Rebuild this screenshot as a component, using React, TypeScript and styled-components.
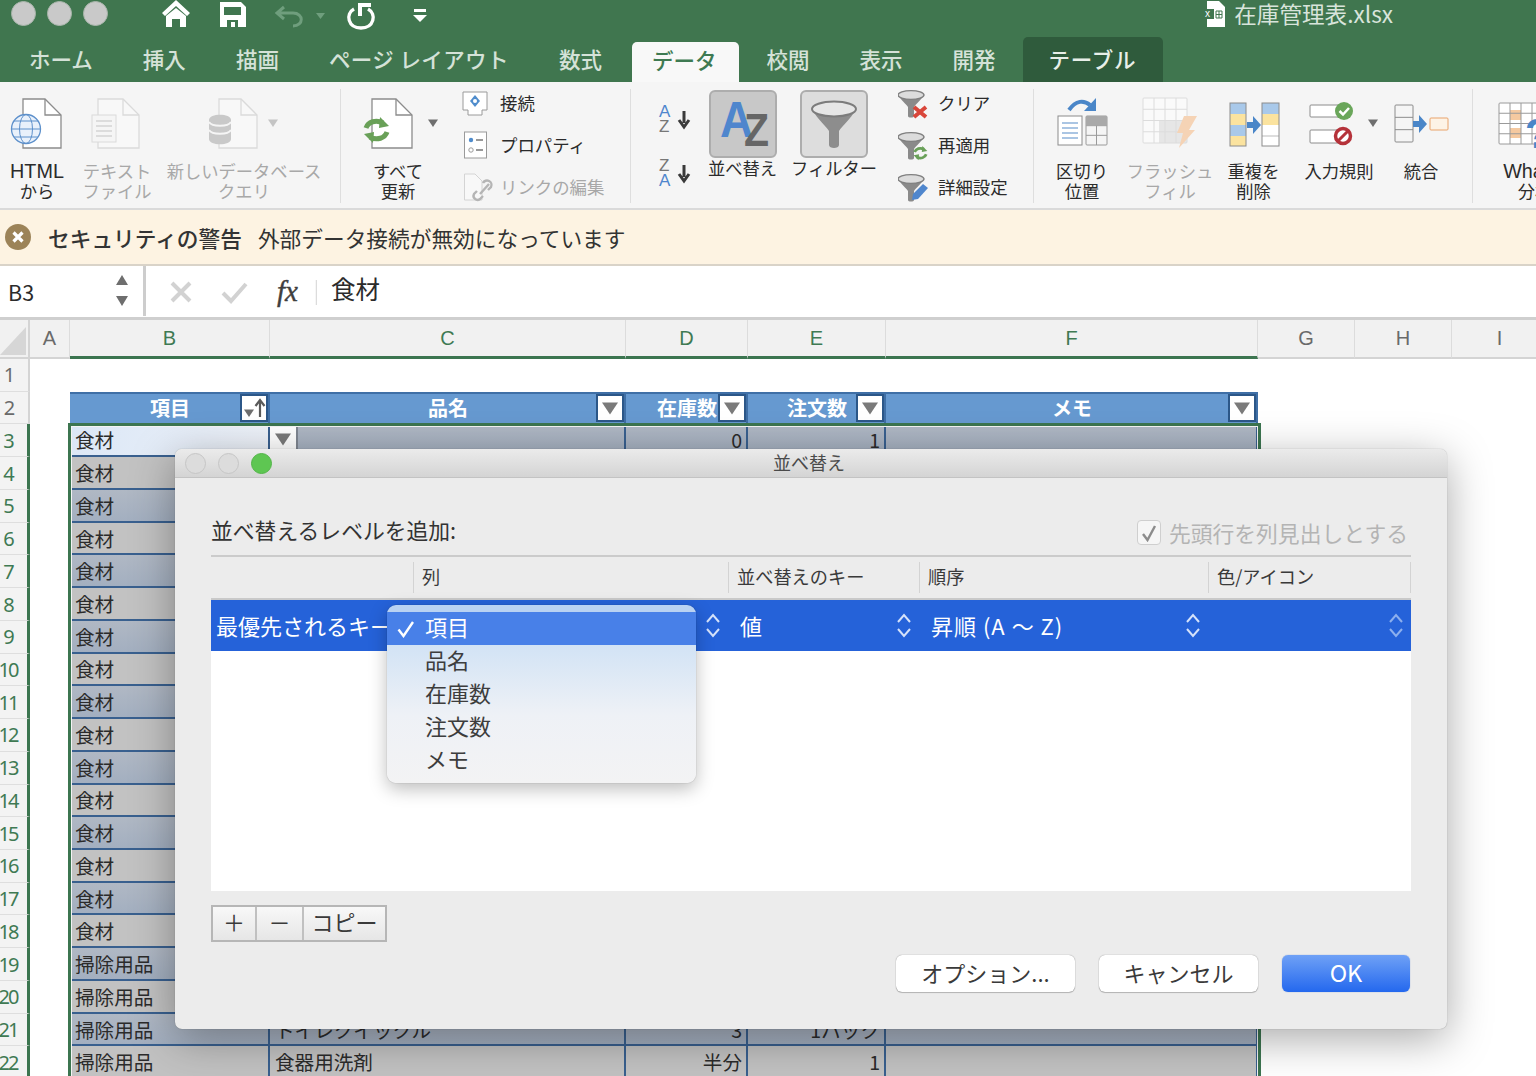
import React from 'react';
import styled, { createGlobalStyle } from 'styled-components';

const GlobalStyle = createGlobalStyle`
  html, body { margin: 0; padding: 0; background: #fff; overflow: hidden; }
  body { font-family: "Noto Sans CJK JP", "Noto Sans", sans-serif; color: #2b2b2b; }
  * { box-sizing: border-box; }
  svg { flex: none; display: block; }
`;

const Page = styled.div`
  position: relative;
  width: 1536px;
  height: 1076px;
  overflow: hidden;
`;

/* title bar and tabs */
const Chrome = styled.header`
  background: #40764f;
`;

const TitleBar = styled.div`
  height: 37px;
  display: flex;
  align-items: flex-start;
  padding-right: 143px;
`;

const Lights = styled.div`
  display: flex;
  gap: 11px;
  padding: 1px 0 0 11px;
  width: 150px;
`;

const Light = styled.span`
  width: 25px;
  height: 25px;
  border-radius: 50%;
  background: #c9c9c9;
  border: 1px solid #a9b5ab;
`;

const FileName = styled.div`
  margin-left: auto;
  display: flex;
  align-items: center;
  gap: 9px;
  height: 28px;
  font-size: 22.6px;
  line-height: 1.2;
  color: #d8e4db;
`;

const Tabs = styled.nav`
  height: 45px;
  display: flex;
  align-items: flex-end;
  padding-left: 4px;
`;

const Tab = styled.div<{ $active?: boolean; $table?: boolean; $wide?: boolean }>`
  height: ${p => (p.$active ? '40px' : '45px')};
  padding: ${p => (p.$active ? '0 23px 5px 20px' : p.$table ? '0 27px 2px 25px' : '0 25px 2px')};
  margin: ${p => (p.$active ? '0 2px 0 5px' : p.$table ? '0 0 0 3px' : '0')};
  display: flex;
  align-items: center;
  font-size: 21.5px;
  font-weight: 500;
  letter-spacing: ${p => (p.$wide ? '0.4px' : p.$table ? '0.8px' : '0')};
  white-space: pre;
  color: ${p => (p.$active ? '#3e7a52' : p.$table ? '#e8efe9' : '#d5e2d8')};
  background: ${p => (p.$active ? '#f8f8f8' : p.$table ? '#2f5b3c' : 'transparent')};
  border-radius: ${p => (p.$active || p.$table ? '5px 5px 0 0' : '0')};
`;

/* ribbon */
const Ribbon = styled.section`
  height: 128px;
  display: flex;
  align-items: flex-start;
  overflow: hidden;
  background: #f5f5f5;
  border-bottom: 2px solid #dadada;
`;

const Sep = styled.div<{ $ml?: number }>`
  flex: none;
  width: 1px;
  height: 114px;
  margin: 7px 0 0 ${p => p.$ml ?? 0}px;
  background: #dedede;
`;

const ToolWrap = styled.div<{ $w: number; $ml?: number }>`
  flex: none;
  width: ${p => p.$w}px;
  margin-left: ${p => p.$ml ?? 0}px;
  padding-top: 8px;
  display: flex;
  flex-direction: column;
  align-items: center;
`;

const ToolLabel = styled.div<{ $dim?: boolean; $tight?: boolean }>`
  margin-top: ${p => (p.$tight ? '0' : '3px')};
  font-size: 17.3px;
  line-height: 20px;
  text-align: center;
  white-space: pre;
  color: ${p => (p.$dim ? '#a8a8a8' : '#2b2b2b')};
`;

const LatinLabel = styled.span`
  font-family: "Liberation Sans", sans-serif;
  font-size: 19.8px;
`;

const ToggleButton = styled.div<{ $dark?: boolean }>`
  width: 68px;
  height: 68px;
  border-radius: 6px;
  border: 2px solid #adadad;
  background: ${p => (p.$dark ? '#c8c8c8' : '#dddddd')};
`;

const SideList = styled.div<{ $w: number; $ml: number }>`
  flex: none;
  width: ${p => p.$w}px;
  margin-left: ${p => p.$ml}px;
  display: flex;
  flex-direction: column;
`;

const SideRow = styled.div<{ $dim?: boolean; $icon: number }>`
  height: 42px;
  display: grid;
  grid-template-columns: ${p => p.$icon}px 1fr;
  align-items: center;
  font-size: 17.4px;
  color: ${p => (p.$dim ? '#a8a8a8' : '#2b2b2b')};
`;

const SideText = styled.span`
  padding-bottom: 2px;
  white-space: nowrap;
`;

/* warning + formula */
const Warning = styled.div`
  height: 56px;
  display: flex;
  align-items: center;
  gap: 16px;
  padding: 0 0 0 5px;
  background: #fdf3e2;
  border-bottom: 2px solid #d9d3c8;
  font-size: 21.7px;
  color: #333;
`;

const WarningTitle = styled.span`
  margin-left: 1px;
  font-weight: 500;
`;

const FormulaBar = styled.div`
  height: 54px;
  display: flex;
  background: #fff;
  border-bottom: 3px solid #cfcfcf;
  padding-bottom: 1px;
`;

const NameBox = styled.div`
  width: 146px;
  padding: 0 14px 0 8px;
  display: flex;
  align-items: center;
  justify-content: space-between;
  border-right: 3px solid #cdcdcd;
  font-size: 21.5px;
`;

const FormulaTools = styled.div`
  width: 171px;
  display: flex;
  align-items: center;
`;

const FormulaValue = styled.div`
  display: flex;
  align-items: center;
  padding: 0 0 5px 14px;
  font-size: 24.5px;
`;

/* sheet */
const Sheet = styled.div`
  position: relative;
  height: 756px;
  overflow: hidden;
  display: grid;
  grid-template-columns: 30px 40px 200px 356px 122px 138px 372px 97px 97px 96px;
  grid-template-rows: 39px;
  grid-auto-rows: 32.74px;
`;

const Corner = styled.div`
  background: #f1f1f1;
  border-right: 2px solid #d4d4d4;
  border-bottom: 2px solid #d4d4d4;
  padding: 7px 0 0 0;
`;

const ColHead = styled.div<{ $active?: boolean }>`
  display: flex;
  align-items: center;
  justify-content: center;
  font-family: "Liberation Sans", sans-serif;
  font-size: 20px;
  color: ${p => (p.$active ? '#3f7a53' : '#6a6a6a')};
  background: #f1f1f1;
  border-right: 1px solid #dcdcdc;
  border-bottom: ${p => (p.$active ? '3px solid #3c7550' : '2px solid #d4d4d4')};
`;

const RowHead = styled.div<{ $active?: boolean }>`
  display: flex;
  align-items: center;
  justify-content: center;
  padding: 0 11px 0 0;
  font-family: "Noto Sans", sans-serif;
  font-size: 20px;
  letter-spacing: -2px;
  color: ${p => (p.$active ? '#3f7a53' : '#6a6a6a')};
  background: #f3f3f3;
  border-bottom: 1px solid #dedede;
  border-right: ${p => (p.$active ? '3px solid #3c7550' : '2px solid #d4d4d4')};
`;

const Blank = styled.div`
  background: #fff;
`;

const TableHead = styled.div`
  position: relative;
  display: flex;
  align-items: center;
  justify-content: center;
  padding-bottom: 2px;
  background: #6699d0;
  box-shadow: inset 0 2px 0 #3f6fa6, inset -2px 0 0 #3f6fa6;
  font-size: 20px;
  font-weight: 700;
  color: #fff;
`;

const FilterButton = styled.div`
  position: absolute;
  right: 2px;
  top: 2px;
  width: 28px;
  height: 28px;
  display: flex;
  align-items: center;
  justify-content: center;
  background: #fff;
  border: 2px solid #2c5788;
`;

const DataCell = styled.div<{ $blue?: boolean; $current?: boolean; $right?: boolean }>`
  position: relative;
  display: flex;
  align-items: center;
  justify-content: ${p => (p.$right ? 'flex-end' : 'flex-start')};
  padding: ${p => (p.$right ? '0 4px 0 0' : '0 0 0 5px')};
  font-size: 19.6px;
  white-space: nowrap;
  background: ${p =>
    p.$current
      ? 'linear-gradient(100deg, #dbe7f6, #eef2f9)'
      : p.$blue
        ? 'linear-gradient(180deg, #b0b8c4, #a3afc0)'
        : '#c2c2c2'};
  border-right: 2px solid #39608f;
  border-bottom: 2px solid #39608f;
`;

const CellDropdown = styled.div`
  position: absolute;
  left: 0;
  top: 2px;
  width: 28px;
  height: 31px;
  padding-top: 7px;
  display: flex;
  justify-content: center;
  background: #fff;
  border-right: 2px solid #7f8691;
`;

const SelectionFrame = styled.div`
  position: absolute;
  left: 68px;
  top: 103px;
  width: 1193px;
  height: 700px;
  border: 3px solid #3c7550;
  box-shadow: inset 0 0 0 1px #f4f4f4;
  pointer-events: none;
`;

/* dialog */
const Dialog = styled.div`
  position: absolute;
  left: 175px;
  top: 449px;
  width: 1272px;
  height: 580px;
  border-radius: 7px;
  background: #ececec;
  box-shadow: 0 0 1px rgba(0, 0, 0, 0.4), 0 10px 44px rgba(0, 0, 0, 0.34);
  display: flex;
  flex-direction: column;
`;

const DialogTitle = styled.div`
  position: relative;
  flex: none;
  height: 29px;
  display: flex;
  align-items: center;
  justify-content: center;
  padding: 0 4px 2px 0;
  border-radius: 7px 7px 0 0;
  border-bottom: 1px solid #c3c3c3;
  background: linear-gradient(180deg, #ebebeb, #d4d4d4);
  font-size: 18px;
  color: #4a4a4a;
`;

const DialogLights = styled.div`
  position: absolute;
  left: 10px;
  top: 4px;
  display: flex;
  gap: 12px;
`;

const DialogLight = styled.span<{ $green?: boolean }>`
  width: 21px;
  height: 21px;
  border-radius: 50%;
  background: ${p => (p.$green ? '#5ec652' : '#dcdcdc')};
  border: 1px solid ${p => (p.$green ? '#52b548' : '#c6c6c6')};
`;

const DialogBody = styled.div`
  flex: 1;
  padding: 0 36px;
  display: flex;
  flex-direction: column;
`;

const Heading = styled.div`
  height: 49px;
  display: flex;
  justify-content: space-between;
  align-items: flex-end;
  padding: 0 3px 10px 0;
  margin-top: 28px;
  font-size: 21.8px;
  color: #333;
`;

const HeaderCheck = styled.label`
  display: flex;
  align-items: center;
  gap: 8px;
  margin-bottom: -3px;
  color: #b4b4b4;
`;

const CheckBox = styled.span`
  width: 24px;
  height: 25px;
  display: flex;
  align-items: center;
  justify-content: center;
  background: #f6f6f6;
  border: 1px solid #cfcfcf;
  border-radius: 4px;
`;

const LevelHead = styled.div`
  height: 45px;
  display: grid;
  grid-template-columns: 203px 315px 191px 289px 202px;
  align-items: center;
  border-top: 2px solid #cbcbcb;
  border-bottom: 2px solid #c9c9c9;
  font-size: 18.2px;
  color: #3a3a3a;
`;

const LevelHeadCell = styled.div`
  height: 31px;
  display: flex;
  align-items: center;
  padding: 0 0 4px 8px;
  border-right: 1px solid #d3d3d3;
`;

const LevelList = styled.div`
  position: relative;
  height: 291px;
  background: #fff;
`;

const LevelRow = styled.div`
  height: 51px;
  display: grid;
  grid-template-columns: 202px 315px 191px 289px 203px;
  background: #2562d9;
  color: #fff;
  font-size: 22px;
`;

const LevelCell = styled.div<{ $key?: boolean }>`
  display: flex;
  align-items: center;
  justify-content: space-between;
  padding: 0 7px 0 ${p => (p.$key ? '5px' : '12px')};
  white-space: nowrap;
  overflow: hidden;
`;

const LevelLabel = styled.span<{ $spread?: boolean }>`
  padding-bottom: 1px;
  letter-spacing: ${p => (p.$spread ? '1px' : '0')};
`;

const Menu = styled.div`
  position: absolute;
  left: 176px;
  top: 5px;
  width: 309px;
  padding: 7px 0 6px;
  border-radius: 9px;
  background: linear-gradient(180deg, #b9d2f2 0, #b9d2f2 7px, #d2e3f5 40px, #eef1f6 110px, #f3f3f4 100%);
  box-shadow: 0 0 1px rgba(0, 0, 0, 0.45), 0 6px 18px rgba(0, 0, 0, 0.26);
`;

const MenuItem = styled.div<{ $selected?: boolean }>`
  position: relative;
  height: 33px;
  display: flex;
  align-items: center;
  padding: 0 0 6px 38px;
  font-size: 22px;
  color: ${p => (p.$selected ? '#fff' : '#3d3d3d')};
  background: ${p => (p.$selected ? '#4880e8' : 'transparent')};
`;

const MenuCheck = styled.svg`
  position: absolute;
  left: 10px;
  top: 8px;
`;

const LevelTools = styled.div`
  margin-top: 14px;
  width: 176px;
  height: 37px;
  display: grid;
  grid-template-columns: 44px 47px 1fr;
  border: 2px solid #b6b6b6;
  background: linear-gradient(180deg, #f8f8f8, #e6e6e6);
  font-size: 22px;
  color: #3a3a3a;
`;

const LevelToolButton = styled.div<{ $last?: boolean }>`
  display: flex;
  align-items: center;
  justify-content: center;
  padding-bottom: 5px;
  line-height: 1;
  border-right: ${p => (p.$last ? 'none' : '2px solid #c0c0c0')};
`;

const Footer = styled.div`
  margin-top: 13px;
  display: flex;
  justify-content: flex-end;
  gap: 24px;
  padding-right: 1px;
`;

const PushButton = styled.div<{ $w: number; $primary?: boolean }>`
  width: ${p => p.$w}px;
  height: 37px;
  display: flex;
  align-items: center;
  justify-content: center;
  padding-bottom: 3px;
  border-radius: 6px;
  font-size: ${p => (p.$primary ? '23.5px' : '22px')};
  color: ${p => (p.$primary ? '#fff' : '#3a3a3a')};
  background: ${p => (p.$primary ? 'linear-gradient(180deg, #6fa1f6, #2468ee)' : '#fff')};
  box-shadow: ${p =>
    p.$primary ? '0 0 1px rgba(30, 90, 200, 0.7)' : '0 0 1px rgba(0, 0, 0, 0.5), 0 1px 1px rgba(0, 0, 0, 0.2)'};
`;

/* drawings */
const Doc = ({ x, y, w, h, dim }: { x: number; y: number; w: number; h: number; dim?: boolean }) => {
  const stroke = dim ? '#dadada' : '#8c8c8c';
  const fold = 16;
  return (
    <g fill={dim ? '#f8f8f8' : '#fff'} stroke={stroke} strokeWidth="1.3">
      <path d={`M${x} ${y}H${x + w - fold}L${x + w} ${y + fold}V${y + h}H${x}Z`} />
      <path d={`M${x + w - fold} ${y}V${y + fold}H${x + w}`} fill="none" />
    </g>
  );
};

const Tri = ({ x, y, fill = '#6f6f6f', s = 5 }: { x: number; y: number; fill?: string; s?: number }) => (
  <path d={`M${x - s} ${y - s * 0.7}H${x + s}L${x} ${y + s * 0.8}Z`} fill={fill} />
);

const Funnel = ({ x, y, s = 1 }: { x: number; y: number; s?: number }) => (
  <g transform={`translate(${x} ${y}) scale(${s})`}>
    <path d="M0 5C3 10 8 14 10 17V26C10 28 16 28 16 26V17C18 14 23 10 26 5Z" fill="#8a8a8a" />
    <ellipse cx="13" cy="5" rx="13" ry="4.4" fill="#dcdcdc" stroke="#7f7f7f" strokeWidth="1.4" />
  </g>
);

const Arrows = ({ x, y, s = 1 }: { x: number; y: number; s?: number }) => (
  <g transform={`translate(${x} ${y}) scale(${s})`} fill="none" stroke="#69a058" strokeWidth="5">
    <path d="M3 11C5 5 13 2 20 6" />
    <path d="M24 15C22 21 14 24 7 20" />
    <path d="M17 0L26 9L16 11Z" fill="#69a058" stroke="none" />
    <path d="M10 26L1 17L11 15Z" fill="#69a058" stroke="none" />
  </g>
);

const TableGrid = ({ x, y, w, h, cols, rows, stroke = '#9a9a9a' }: { x: number; y: number; w: number; h: number; cols: number; rows: number; stroke?: string }) => (
  <g stroke={stroke} strokeWidth="1" fill="none">
    <rect x={x} y={y} width={w} height={h} rx="1" />
    {Array.from({ length: cols - 1 }, (_, i) => (
      <path key={`c${i}`} d={`M${x + ((i + 1) * w) / cols} ${y}V${y + h}`} />
    ))}
    {Array.from({ length: rows - 1 }, (_, i) => (
      <path key={`r${i}`} d={`M${x} ${y + ((i + 1) * h) / rows}H${x + w}`} />
    ))}
  </g>
);

const UpDown = ({ dim }: { dim?: boolean }) => (
  <svg width="16" height="27" viewBox="0 0 16 27" fill="none" stroke={dim ? '#8db0ee' : '#d5e2fa'} strokeWidth="2">
    <path d="M2 10L8 3L14 10" />
    <path d="M2 17L8 24L14 17" />
  </svg>
);

const Tool = ({ w, ml, label, dim, children }: { w: number; ml?: number; label: React.ReactNode; dim?: boolean; children: React.ReactNode }) => (
  <ToolWrap $w={w} $ml={ml}>
    <svg width={w} height={68} viewBox={`0 0 ${w} 68`}>{children}</svg>
    <ToolLabel $dim={dim}>{label}</ToolLabel>
  </ToolWrap>
);

const SideIcon = ({ w, children }: { w: number; children: React.ReactNode }) => (
  <svg width={w} height={42} viewBox={`0 0 ${w} 42`}>{children}</svg>
);

const SortGlyph = ({ y, top, bottom, topBlue }: { y: number; top: string; bottom: string; topBlue: boolean }) => (
  <g fontFamily="Liberation Sans, sans-serif" fontSize="17">
    <text x="28" y={y + 14} fill={topBlue ? '#4f86cd' : '#777'}>{top}</text>
    <text x="28" y={y + 29} fill={topBlue ? '#777' : '#4f86cd'}>{bottom}</text>
    <path d={`M53 ${y + 8}V${y + 20}M48 ${y + 17}L53 ${y + 24}L58 ${y + 17}`} stroke="#3a3a3a" strokeWidth="3" fill="none" />
  </g>
);

const tabs = ['ホーム', '挿入', '描画', 'ページ レイアウト', '数式'];
const tabsAfter = ['校閲', '表示', '開発'];
const colLetters: [string, boolean][] = [
  ['A', false], ['B', true], ['C', true], ['D', true], ['E', true], ['F', true], ['G', false], ['H', false], ['I', false],
];
const tableHeads = ['項目', '品名', '在庫数', '注文数', 'メモ'];

type RowData = { item: string; name?: string; stock?: string; order?: string };
const rows: RowData[] = [
  { item: '食材', stock: '0', order: '1' },
  ...Array.from({ length: 15 }, () => ({ item: '食材' })),
  { item: '掃除用品' },
  { item: '掃除用品' },
  { item: '掃除用品', name: 'トイレクイックル', stock: '3', order: '1パック' },
  { item: '掃除用品', name: '食器用洗剤', stock: '半分', order: '1' },
];
const menuItems = ['項目', '品名', '在庫数', '注文数', 'メモ'];

export default function App() {
  return (
    <Page>
      <GlobalStyle />
      <Chrome>
        <TitleBar>
          <Lights>
            <Light /><Light /><Light />
          </Lights>
          <svg width="290" height="32" viewBox="150 0 290 32">
            <path d="M176 0L190 13L187 16L176 6L165 16L162 13Z" fill="#fff" />
            <path d="M166 16L176 8L186 16V27H180V19H172V27H166Z" fill="#fff" />
            <path d="M220 2H241L246 7V27H220Z" fill="#fff" />
            <rect x="224" y="7" width="17" height="8" fill="#40764f" />
            <rect x="227" y="20" width="11" height="7" fill="#40764f" />
            <rect x="231" y="22" width="4" height="5" fill="#fff" />
            <path d="M284 7L277 13L284 19M278 13H293C304 13 304 26 293 26" fill="none" stroke="#6f9e7d" strokeWidth="3" />
            <path d="M316 13H325L320.500 19Z" fill="#6f9e7d" />
            <path d="M354 9C345 14 348 28 361 28C374 28 377 14 368 9" fill="none" stroke="#fff" strokeWidth="3.400" />
            <path d="M358 3H371V7H362V16H358Z" fill="#fff" />
            <rect x="414" y="9" width="12" height="3" fill="#fff" />
            <path d="M413 15H427L420 22Z" fill="#fff" />
          </svg>
          <FileName>
            <svg width="21" height="26" viewBox="0 0 21 26">
              <path d="M3 0H15L21 6V26H3Z" fill="#fff" />
              <rect x="0" y="8" width="10" height="10" fill="#40764f" />
              <text x="1" y="16" fontSize="10" fill="#fff" fontFamily="Liberation Sans, sans-serif">x</text>
              <path d="M12 10H18V17H12ZM15 10V17M12 13.500H18" stroke="#40764f" strokeWidth="1" fill="none" />
            </svg>
            在庫管理表.xlsx
          </FileName>
        </TitleBar>
        <Tabs>
          {tabs.map(t => <Tab key={t} $wide={t.length > 4}>{t}</Tab>)}
          <Tab $active>データ</Tab>
          {tabsAfter.map(t => <Tab key={t}>{t}</Tab>)}
          <Tab $table>テーブル</Tab>
        </Tabs>
      </Chrome>

      <Ribbon>
        <Tool w={74} label={<><LatinLabel>HTML</LatinLabel>{'\n'}から</>}>
          <Doc x={23} y={9} w={38} h={49} />
          <circle cx="26" cy="39" r="14.500" fill="#e9f1fb" stroke="#5d90cb" strokeWidth="1.300" />
          <ellipse cx="26" cy="39" rx="6.500" ry="14.500" fill="none" stroke="#5d90cb" />
          <path d="M11.500 39H40.500M14 31H38M14 47H38" stroke="#5d90cb" fill="none" />
        </Tool>
        <Tool w={86} label={'テキスト\nファイル'} dim>
          <Doc x={24} y={9} w={41} h={49} dim />
          <rect x="18" y="25" width="24" height="27" fill="#f5f5f5" stroke="#dadada" />
          <path d="M22 31H38M22 36H38M22 41H38M22 46H38" stroke="#d4d4d4" strokeWidth="1.500" />
        </Tool>
        <Tool w={168} label={'新しいデータベース\nクエリ'} dim>
          <Doc x={59} y={9} w={38} h={49} dim />
          <path d="M49 30C49 23 71 23 71 30V49C71 56 49 56 49 49Z" fill="#c9c9c9" />
          <path d="M49 32C52 37 68 37 71 32M49 40C52 45 68 45 71 40" stroke="#f5f5f5" strokeWidth="2" fill="none" />
          <Tri x={113} y={33} fill="#c4c4c4" />
        </Tool>
        <Sep $ml={12} />
        <Tool w={114} label={'すべて\n更新'}>
          <Doc x={31} y={9} w={40} h={49} />
          <Arrows x={22} y={27} />
          <Tri x={92} y={33} />
        </Tool>
        <SideList $w={168} $ml={7}>
          <SideRow $icon={38}>
            <SideIcon w={38}>
              <path d="M1 10H25V28H20V33H6V28H1Z" fill="#fff" stroke="#9a9a9a" />
              <path d="M13 13L18 19L13 25L8 19Z" fill="#4f8ccc" />
              <circle cx="13" cy="19" r="2" fill="#fff" />
            </SideIcon>
            <SideText>接続</SideText>
          </SideRow>
          <SideRow $icon={38}>
            <SideIcon w={38}>
              <rect x="2.500" y="8" width="22" height="26" fill="#fff" stroke="#9a9a9a" />
              <circle cx="9" cy="16" r="2.200" fill="#4f8ccc" />
              <circle cx="9" cy="26" r="2.200" fill="none" stroke="#9a9a9a" />
              <path d="M14 16H21M14 26H21" stroke="#777" strokeWidth="1.500" />
            </SideIcon>
            <SideText>プロパティ</SideText>
          </SideRow>
          <SideRow $icon={38} $dim>
            <SideIcon w={38}>
              <path d="M2.500 8H13L20 15V34H2.500Z" fill="#f8f8f8" stroke="#d4d4d4" />
              <path d="M27 18L18 28M21 17a4 4 0 0 1 8 4l-3 3M21 30l-3 3a4 4 0 0 1-6-5l3-3" fill="none" stroke="#b5b5b5" strokeWidth="2.400" />
            </SideIcon>
            <SideText>リンクの編集</SideText>
          </SideRow>
        </SideList>
        <Sep />
        <svg width="77" height="110" viewBox="0 0 77 110">
          <SortGlyph y={21} top="A" bottom="Z" topBlue />
          <SortGlyph y={75} top="Z" bottom="A" topBlue={false} />
        </svg>
        <ToolWrap $w={69}>
          <ToggleButton $dark>
            <svg width="64" height="64" viewBox="0 0 64 64">
              <text x="9" y="45" fontSize="50" fontWeight="700" fill="#4f86cd" fontFamily="Liberation Sans, sans-serif" textLength="33" lengthAdjust="spacingAndGlyphs">A</text>
              <text x="33" y="54" fontSize="46" fontWeight="700" fill="#666" fontFamily="Liberation Sans, sans-serif" textLength="25" lengthAdjust="spacingAndGlyphs">Z</text>
            </svg>
          </ToggleButton>
          <ToolLabel $tight>並べ替え</ToolLabel>
        </ToolWrap>
        <ToolWrap $w={100} $ml={7}>
          <ToggleButton>
            <svg width="64" height="64" viewBox="0 0 64 64">
              <path d="M10 17C16 28 24 34 27 39V53C27 57 37 57 37 53V39C40 34 48 28 54 17Z" fill="#8d8d8d" />
              <ellipse cx="32" cy="17" rx="22" ry="7.500" fill="#e6e6e6" stroke="#7c7c7c" strokeWidth="2" />
            </svg>
          </ToggleButton>
          <ToolLabel $tight>フィルター</ToolLabel>
        </ToolWrap>
        <SideList $w={135} $ml={14}>
          <SideRow $icon={40}>
            <SideIcon w={40}>
              <Funnel x={0} y={8} />
              <path d="M16 25L28 35M28 25L16 35" stroke="#d9463a" strokeWidth="4" />
            </SideIcon>
            <SideText>クリア</SideText>
          </SideRow>
          <SideRow $icon={40}>
            <SideIcon w={40}>
              <Funnel x={0} y={8} />
              <Arrows x={15} y={22} s={0.55} />
            </SideIcon>
            <SideText>再適用</SideText>
          </SideRow>
          <SideRow $icon={40}>
            <SideIcon w={40}>
              <Funnel x={0} y={8} />
              <path d="M14 34L15 28L25 18L30 22L20 33Z" fill="#4f86cd" />
            </SideIcon>
            <SideText>詳細設定</SideText>
          </SideRow>
        </SideList>
        <Sep />
        <Tool w={96} label={'区切り\n位置'}>
          <rect x="24" y="26" width="24" height="29" fill="#fff" stroke="#8c8c8c" />
          <path d="M28 33H44M28 38H44M28 43H44M28 48H44" stroke="#8fb3da" strokeWidth="1.500" />
          <TableGrid x={52} y={26} w={21} h={29} cols={2} rows={3} />
          <rect x="52" y="26" width="21" height="9.600" fill="#a9a9a9" />
          <path d="M35 20C42 10 50 10 56 15" fill="none" stroke="#4a86c8" strokeWidth="4" />
          <path d="M62 8V21H50Z" fill="#4a86c8" />
        </Tool>
        <Tool w={80} label={'フラッシュ\nフィル'} dim>
          <rect x="13" y="8" width="44" height="45" fill="#fafafa" />
          <rect x="29" y="30" width="28" height="23" fill="#e6e6e6" />
          <TableGrid x={13} y={8} w={44} h={45} cols={4} rows={4} stroke="#dcdcdc" />
          <path d="M54 26H67L59 40H65L49 58L53 43H47Z" fill="#f5d3b5" />
        </Tool>
        <Tool w={87} label={'重複を\n削除'}>
          <rect x="20" y="13" width="16" height="11" fill="#a9c9ea" />
          <rect x="20" y="24" width="16" height="11" fill="#fbe39f" />
          <rect x="20" y="35" width="16" height="11" fill="#a9c9ea" />
          <rect x="20" y="46" width="16" height="10" fill="#fbe39f" />
          <rect x="52" y="13" width="17" height="11" fill="#a9c9ea" />
          <rect x="52" y="24" width="17" height="11" fill="#fbe39f" />
          <rect x="52" y="35" width="17" height="21" fill="#fff" />
          <path d="M52 46H69" stroke="#bbb" />
          <rect x="20" y="13" width="16" height="43" fill="none" stroke="#8c8c8c" />
          <rect x="52" y="13" width="17" height="43" fill="none" stroke="#8c8c8c" />
          <path d="M37 32H43V26L51 35L43 44V38H37Z" fill="#4a86c8" />
        </Tool>
        <Tool w={84} label="入力規則">
          <rect x="13" y="15" width="30" height="12" rx="1" fill="#fff" stroke="#8c8c8c" />
          <circle cx="47" cy="21" r="9" fill="#6aa65a" />
          <path d="M42.500 21L46 24.500L52 18" fill="none" stroke="#fff" strokeWidth="2.500" />
          <rect x="13" y="40" width="30" height="13" rx="1" fill="#fff" stroke="#8c8c8c" />
          <circle cx="46" cy="46" r="7.500" fill="#fff" stroke="#b5323a" strokeWidth="3.500" />
          <path d="M41 51L51 41" stroke="#b5323a" strokeWidth="3" />
          <Tri x={76} y={33} />
        </Tool>
        <Tool w={80} label="統合">
          <TableGrid x={14} y={15} w={18} h={37} cols={1} rows={3} stroke="#8c8c8c" />
          <path d="M32 31H38V25L46 34L38 43V37H32Z" fill="#4a86c8" />
          <rect x="49" y="28" width="18" height="12" rx="1" fill="#fdf3e6" stroke="#e9a36a" />
        </Tool>
        <Sep $ml={11} />
        <Tool w={124} label={<><LatinLabel>What-If</LatinLabel>{'\n'}分析</>}>
          <rect x="26" y="13" width="44" height="41" fill="#fff" />
          <rect x="37" y="20" width="11" height="10" fill="#f5c9a0" />
          <rect x="37" y="38" width="11" height="10" fill="#f5c9a0" />
          <TableGrid x={26} y={13} w={44} h={41} cols={4} rows={4} />
          <text x="52" y="58" fontSize="42" fontWeight="700" fill="#4a86c8" fontFamily="Liberation Sans, sans-serif">?</text>
        </Tool>
      </Ribbon>

      <Warning>
        <svg width="26" height="26" viewBox="0 0 26 26">
          <circle cx="13" cy="13" r="13" fill="#9c8358" />
          <path d="M8.500 8.500L17.500 17.500M17.500 8.500L8.500 17.500" stroke="#fff" strokeWidth="3.200" />
        </svg>
        <WarningTitle>セキュリティの警告</WarningTitle>
        外部データ接続が無効になっています
      </Warning>

      <FormulaBar>
        <NameBox>
          B3
          <svg width="14" height="34" viewBox="0 0 14 34" fill="#6e6e6e">
            <path d="M7 1L13 11H1Z" />
            <path d="M7 32L13 22H1Z" />
          </svg>
        </NameBox>
        <FormulaTools>
          <svg width="171" height="44" viewBox="146 268 171 44">
            <path d="M172 282L190 300M190 282L172 300" stroke="#d2d2d2" strokeWidth="4" />
            <path d="M223 292L231 300L246 283" stroke="#d2d2d2" strokeWidth="4" fill="none" />
            <text x="277" y="300" fontSize="29" fontStyle="italic" fontFamily="Liberation Serif, serif" fill="#3f3f3f" stroke="#3f3f3f" strokeWidth="0.400">fx</text>
            <path d="M316.500 279V304" stroke="#dcdcdc" strokeWidth="1.500" />
          </svg>
        </FormulaTools>
        <FormulaValue>食材</FormulaValue>
      </FormulaBar>

      <Sheet>
        <Corner>
          <svg width="26" height="28" viewBox="0 0 26 28">
            <path d="M0 28L26 0V28Z" fill="#d6d6d6" />
          </svg>
        </Corner>
        {colLetters.map(([c, active]) => <ColHead key={c} $active={active}>{c}</ColHead>)}

        <RowHead>1</RowHead>
        {colLetters.map(([c]) => <Blank key={c} />)}

        <RowHead>2</RowHead>
        <Blank />
        {tableHeads.map((h, i) => (
          <TableHead key={h}>
            {h}
            <FilterButton>
              <svg width="24" height="24" viewBox="0 0 24 24">
                {i === 0 ? (
                  <>
                    <Tri x={7} y={17} fill="#6e6e6e" s={5} />
                    <path d="M18 21V6M13.500 10L18 4L22.500 10" fill="none" stroke="#5a5a5a" strokeWidth="2.200" />
                  </>
                ) : (
                  <Tri x={12} y={12} fill="#7a7a7a" s={8} />
                )}
              </svg>
            </FilterButton>
          </TableHead>
        ))}
        <Blank /><Blank /><Blank />

        {rows.map((r, i) => {
          const blue = i % 2 === 0;
          return (
            <React.Fragment key={i}>
              <RowHead $active>{i + 3}</RowHead>
              <Blank />
              <DataCell $blue={blue} $current={i === 0}>{r.item}</DataCell>
              <DataCell $blue={blue}>
                {r.name}
                {i === 0 && (
                  <CellDropdown>
                    <svg width="20" height="14" viewBox="0 0 20 14">
                      <Tri x={10} y={6} fill="#7a7a7a" s={8} />
                    </svg>
                  </CellDropdown>
                )}
              </DataCell>
              <DataCell $blue={blue} $right>{r.stock}</DataCell>
              <DataCell $blue={blue} $right>{r.order}</DataCell>
              <DataCell $blue={blue} />
              <Blank /><Blank /><Blank />
            </React.Fragment>
          );
        })}
        <SelectionFrame />
      </Sheet>

      <Dialog>
        <DialogTitle>
          <DialogLights>
            <DialogLight /><DialogLight /><DialogLight $green />
          </DialogLights>
          並べ替え
        </DialogTitle>
        <DialogBody>
          <Heading>
            並べ替えるレベルを追加:
            <HeaderCheck>
              <CheckBox>
                <svg width="16" height="18" viewBox="0 0 16 18">
                  <path d="M2 10L6.500 16L14 2" fill="none" stroke="#8c8c8c" strokeWidth="2.400" />
                </svg>
              </CheckBox>
              先頭行を列見出しとする
            </HeaderCheck>
          </Heading>
          <LevelHead>
            <LevelHeadCell />
            <LevelHeadCell>列</LevelHeadCell>
            <LevelHeadCell>並べ替えのキー</LevelHeadCell>
            <LevelHeadCell>順序</LevelHeadCell>
            <LevelHeadCell>色/アイコン</LevelHeadCell>
          </LevelHead>
          <LevelList>
            <LevelRow>
              <LevelCell $key><LevelLabel>最優先されるキー</LevelLabel></LevelCell>
              <LevelCell><LevelLabel>項目</LevelLabel><UpDown /></LevelCell>
              <LevelCell><LevelLabel>値</LevelLabel><UpDown /></LevelCell>
              <LevelCell><LevelLabel $spread>昇順 (A ～ Z)</LevelLabel><UpDown /></LevelCell>
              <LevelCell><span /><UpDown dim /></LevelCell>
            </LevelRow>
            <Menu>
              {menuItems.map((m, i) => (
                <MenuItem key={m} $selected={i === 0}>
                  {i === 0 && (
                    <MenuCheck width="18" height="18" viewBox="0 0 18 18">
                      <path d="M1.500 9.500L6.500 16L16 2" fill="none" stroke="#fff" strokeWidth="2.400" />
                    </MenuCheck>
                  )}
                  {m}
                </MenuItem>
              ))}
            </Menu>
          </LevelList>
          <LevelTools>
            <LevelToolButton>＋</LevelToolButton>
            <LevelToolButton>－</LevelToolButton>
            <LevelToolButton $last>コピー</LevelToolButton>
          </LevelTools>
          <Footer>
            <PushButton $w={179}>オプション...</PushButton>
            <PushButton $w={159}>キャンセル</PushButton>
            <PushButton $w={128} $primary>OK</PushButton>
          </Footer>
        </DialogBody>
      </Dialog>
    </Page>
  );
}
